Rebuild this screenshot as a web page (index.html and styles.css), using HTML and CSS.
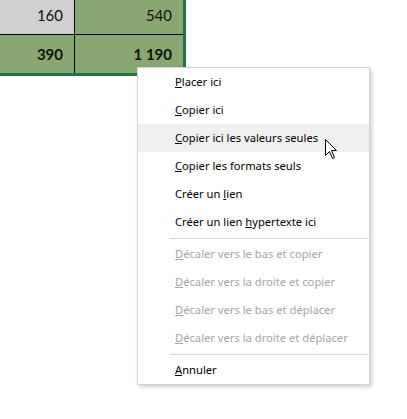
FILE: index.html
```html
<!DOCTYPE html>
<html lang="fr">
<head>
    <meta charset="UTF-8">
    <meta name="viewport" content="width=device-width, initial-scale=1.0">
    <title>Menu contextuel</title>
    <link rel="stylesheet" href="styles.css">
</head>
<body>
<div class="sheet">
    <div class="cell gray">160</div>
    <div class="cell">540</div>
    <div class="cell bold">390</div>
    <div class="cell bold">1 190</div>
</div>

<ul class="menu">
    <li class="item"><u>P</u>lacer ici</li>
    <li class="item"><u>C</u>opier ici</li>
    <li class="item hover"><u>C</u>opier ici les valeurs seules</li>
    <li class="item"><u>C</u>opier les formats seuls</li>
    <li class="item">Créer un <u>l</u>ien</li>
    <li class="item">Créer un lien <u>h</u>ypertexte ici</li>
    <li class="sep"></li>
    <li class="item off"><u>D</u>écaler vers le bas et copier</li>
    <li class="item off"><u>D</u>écaler vers la droite et copier</li>
    <li class="item off"><u>D</u>écaler vers le bas et déplacer</li>
    <li class="item off"><u>D</u>écaler vers la droite et déplacer</li>
    <li class="sep"></li>
    <li class="item"><u>A</u>nnuler</li>
</ul>

<svg class="cursor" width="13" height="21" viewBox="0 0 13 21">
    <path d="M0.5 0.5 L0.5 16.5 L4.5 12.5 L7.5 19.5 L9.5 18.5 L6.5 11.5 L11.5 11.5 Z" fill="#fff" stroke="#000" stroke-width="1"/>
</svg>
</body>
</html>
```

FILE: styles.css
```css
body {
    margin: 0;
    background: #fff;
    font-family: "Noto Sans", Arial, sans-serif;
}
.sheet {
    display: grid;
    grid-template-columns: 74px 108px;
    grid-template-rows: 34px 38px;
    gap: 1px;
    width: 183px;
    background: #000;
    border-right: 3px solid #217346;
    border-bottom: 3px solid #217346;
}
.cell {
    display: flex;
    align-items: flex-end;
    justify-content: flex-end;
    padding: 0 11px 11px 0;
    background: #88a772;
    font-family: Lato, "Liberation Sans", sans-serif;
    font-size: 15px;
    line-height: 15px;
    color: #111;
}
.gray {
    background: #d0d0d0;
}
.bold {
    font-weight: bold;
}
.menu {
    position: absolute;
    left: 137px;
    top: 67px;
    width: 231px;
    margin: 0;
    padding: 0;
    list-style: none;
    background: #fff;
    border: 1px solid #d4d4d4;
    box-shadow: 2px 2px 4px rgba(0, 0, 0, 0.18);
}
.item {
    height: 28px;
    line-height: 28px;
    padding-left: 37px;
    font-size: 11.2px;
    color: #000;
    white-space: nowrap;
}
.item.hover {
    background: #f0f0f0;
}
.item.off {
    color: #a6a6a6;
}
.sep {
    height: 1px;
    margin: 2px 0 1px 32px;
    background: #d9d9d9;
}
.cursor {
    position: absolute;
    left: 325px;
    top: 139px;
}
```
